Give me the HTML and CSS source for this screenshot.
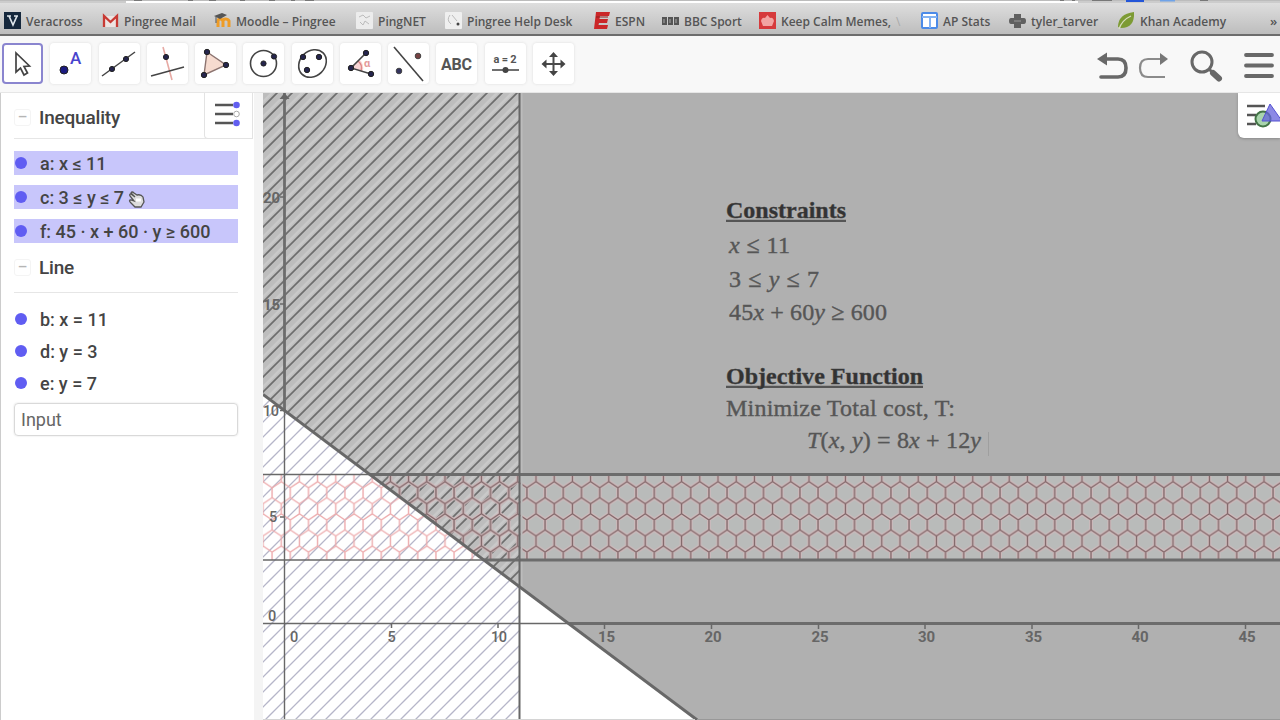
FILE: index.html
```html
<!DOCTYPE html>
<html lang="en">
<head>
<meta charset="utf-8">
<title>Inequality grapher</title>
<link rel="stylesheet" href="styles.css">
</head>
<body>
<div class="app">
  <div class="tabstrip">
    <svg width="1280" height="3" viewBox="0 0 1280 3"><path d="M0 0H1280" stroke="#bcbcbc" stroke-width="2"/><path d="M126 2H1078" stroke="#fff" stroke-width="2"/><path d="M134 0h8M188 0h5M209 0h7M240 0h5M269 0h6M291 0h4M305 0h9M1060 0h4M1072 0h3M1092 0h20M1200 0h8" stroke="#777" stroke-width="2"/><path d="M1126 0h18" stroke="#2456d8" stroke-width="4"/><path d="M1160 0h15" stroke="#6fa3e8" stroke-width="3"/></svg>
  </div>
  <nav class="bookmarks">
    <a class="bm"><svg width="18" height="18"><rect x="1" y="0" width="17" height="17" fill="#16283d"/><path d="M4 4h4M11 4h4M6 4l4 9 4-9" fill="none" stroke="#dfe6ec" stroke-width="1.7"/></svg><span class="t1">Veracross</span></a>
    <a class="bm"><svg width="18" height="18"><rect x="2" y="4" width="15" height="11" fill="#eee4e2"/><path d="M3 15V4l6.500 6L16 4v11" fill="none" stroke="#c83a34" stroke-width="2.300"/></svg><span class="t2">Pingree Mail</span></a>
    <a class="bm"><svg width="18" height="18"><path d="M5 15V9q0-2 2-2t3 2v6M10 9q0-2 2.500-2T16 9v6" fill="none" stroke="#ee9c27" stroke-width="3"/><path d="M1 4l8-3 5 2-7 4z" fill="#555"/><path d="M3 5v6" stroke="#555"/></svg><span class="t3">Moodle – Pingree</span></a>
    <a class="bm"><svg width="18" height="18"><rect x="1" y="0" width="17" height="17" rx="1" fill="#ececec"/><path d="M4 5l4-2 3 3 4-2M5 10l3 3 2-4 4 3" fill="none" stroke="#bbb"/></svg><span class="t4">PingNET</span></a>
    <a class="bm"><svg width="18" height="18"><rect x="1" y="0" width="17" height="17" rx="1" fill="#efefef"/><path d="M6 3q-4 5 1 9M8 3l5 6" fill="none" stroke="#bbb"/><circle cx="14" cy="12" r="1.500" fill="#444"/></svg><span class="t5">Pingree Help Desk</span></a>
    <a class="bm"><svg width="18" height="18"><path d="M4 0h14l-1 4H8l-.5 3H16l-1 4H7l-.5 2H16l-1 4H2z" fill="#cb2729"/><path d="M4 5h12" stroke="#8d2020" stroke-width="1"/></svg><span class="t6">ESPN</span></a>
    <a class="bm"><svg width="18" height="18"><path d="M1 5h5v8H1zM7 5h5v8H7zM13 5h5v8h-5z" fill="#555"/><path d="M3 7v4M9 7v4M15 7v4" stroke="#aaa"/></svg><span class="t7">BBC Sport</span></a>
    <a class="bm"><svg width="18" height="18"><rect x="1" y="0" width="17" height="17" fill="#d63a3c"/><path d="M3 9q1-4 4-3l2.500-3L12 6q3-1 4 3l-2 5H5z" fill="#f2a4a2"/></svg><span class="t8">Keep Calm Memes,</span><i class="fade">\</i></a>
    <a class="bm"><svg width="18" height="18"><rect x="2" y="1" width="15" height="15" rx="1" fill="#fff" stroke="#4c8be8" stroke-width="2"/><path d="M2 5h15M10 5v11" stroke="#83b2f1" stroke-width="2"/></svg><span class="t9">AP Stats</span></a>
    <a class="bm"><svg width="18" height="18"><path d="M6 2h7v4h3q2 0 2 3t-2 3h-3v4H6v-4H3Q1 12 1 9t2-3h3z" fill="#606060"/><path d="M6 9h7" stroke="#999"/></svg><span class="t10">tyler_tarver</span></a>
    <a class="bm"><svg width="18" height="18"><path d="M1 15Q1 2 17 0q1 16-13 16z" fill="#7d9b34"/><path d="M2 17Q5 8 14 4" fill="none" stroke="#d8ddc0" stroke-width="1.300"/></svg><span class="t11">Khan Academy</span></a>
    <a class="bm more">»</a>
  </nav>

  <header class="toolbar">
    <div class="tools">
      <button class="tool active"><svg width="41" height="41"><path d="M14 10v19l4.500-4 3.500 7 3.500-2-3.500-6.500 5.500-.5z" fill="#fff" stroke="#444" stroke-width="1.700"/></svg></button>
      <button class="tool"><svg width="41" height="41"><circle cx="14" cy="27" r="4" fill="#1b1b80" stroke="#222" stroke-width="1"/><text x="20" y="21" class="pointA">A</text></svg></button>
      <button class="tool"><svg width="41" height="41"><path d="M3 33L36 9" stroke="#444" stroke-width="1.500"/><g class="dot"><circle cx="13" cy="26" r="2.600"/><circle cx="27" cy="16" r="2.600"/></g></svg></button>
      <button class="tool"><svg width="41" height="41"><path d="M16 4l9 33" stroke="#e7aaa4" stroke-width="1.600"/><path d="M4 33l33-9" stroke="#444" stroke-width="1.500"/><g class="dot"><circle cx="19" cy="14" r="2.600"/></g></svg></button>
      <button class="tool"><svg width="41" height="41"><path d="M12 9l19 13-22 10z" fill="#f6dbcf" stroke="#8c7470" stroke-width="1.400"/><g class="dot"><circle cx="12" cy="9" r="2.700"/><circle cx="31" cy="22" r="2.700"/><circle cx="9" cy="32" r="2.700"/></g></svg></button>
      <button class="tool"><svg width="41" height="41"><circle cx="20.500" cy="20.500" r="13" fill="none" stroke="#444" stroke-width="1.600"/><g class="dot"><circle cx="20.500" cy="20.500" r="2.600"/><circle cx="31" cy="13.500" r="2.600"/></g></svg></button>
      <button class="tool"><svg width="41" height="41"><ellipse cx="20.500" cy="20.500" rx="15" ry="12.500" transform="rotate(-45 20.500 20.500)" fill="none" stroke="#444" stroke-width="1.600"/><g class="dot"><circle cx="11" cy="14" r="2.700"/><circle cx="27" cy="14" r="2.700"/><circle cx="15" cy="27" r="2.700"/></g></svg></button>
      <button class="tool"><svg width="41" height="41"><path d="M11 25l9-8q4 4 3 11z" fill="#f8d5d5"/><path d="M18 18q5 4 3 10" fill="none" stroke="#df8888" stroke-width="1.500"/><path d="M26 10L11 25l20 6" fill="none" stroke="#444" stroke-width="1.500"/><text x="24" y="24" class="alpha">α</text><g class="dot"><circle cx="26" cy="10" r="2.700"/><circle cx="11" cy="25" r="2.700"/><circle cx="31" cy="31" r="2.700"/></g></svg></button>
      <button class="tool"><svg width="41" height="41"><path d="M6 4l29 34" stroke="#444" stroke-width="1.600"/><circle cx="30" cy="13" r="2.800" fill="#784242" stroke="#444"/><circle cx="11" cy="28" r="2.800" fill="#35355f" stroke="#444"/></svg></button>
      <button class="tool"><svg width="41" height="41"><text x="5" y="27" textLength="31" class="abc">ABC</text></svg></button>
      <button class="tool"><svg width="41" height="41"><text x="8.500" y="20" textLength="23" class="slider">a = 2</text><path d="M7 27h27" stroke="#555" stroke-width="1.700"/><circle cx="20.500" cy="27" r="3" fill="#444"/></svg></button>
      <button class="tool"><svg width="41" height="41"><path d="M20.500 12v18M11 21h19" stroke="#4a4a4a" stroke-width="2"/><path d="M20.500 9l-4.500 5h9zM20.500 33l-4.500-5h9zM8.500 21l5-4.500v9zM32.500 21l-5-4.500v9z" fill="#444"/></svg></button>
    </div>
    <svg class="actions" width="190" height="50" viewBox="1090 42 190 50">
      <path d="M1104 59h14q8 0 8 9t-8 9h-17" fill="none" stroke="#686868" stroke-width="3.600" stroke-linecap="round"/><path d="M1097 59l10-6.500v13z" fill="#686868"/>
      <path d="M1162 59h-14q-8 0-8 9t8 9h17" fill="none" stroke="#8b8b8b" stroke-width="2.200"/><path d="M1168 59l-8-6v12z" fill="#777"/>
      <circle cx="1202" cy="62" r="10" fill="none" stroke="#686868" stroke-width="3"/><path d="M1209 69l4 4" stroke="#686868" stroke-width="3"/><path d="M1213 73l6 5.500" stroke="#686868" stroke-width="6" stroke-linecap="round"/>
      <path d="M1246 55h26M1246 65.500h26M1246 76h26" stroke="#686868" stroke-width="3.800" stroke-linecap="round"/>
    </svg>
  </header>

  <main class="main">
    <aside class="algebra">
      <div class="group first"><span class="minus">–</span><span class="gname gi">Inequality</span>
        <button class="style"><svg width="48" height="45"><path d="M10 12h18M10 21h18M10 30h18" stroke="#555" stroke-width="2.500"/><circle cx="31.500" cy="12" r="3.300" fill="#625ff0"/><circle cx="31.500" cy="21" r="2.800" fill="#fff" stroke="#aaa"/><circle cx="31.500" cy="30" r="3.300" fill="#625ff0"/></svg></button>
      </div>
      <ul class="ineqs">
        <li><b class="mark"></b><span class="r1">a: x ≤ 11</span></li>
        <li><b class="mark"></b><span class="r2">c: 3 ≤ y ≤ 7</span>
          <svg class="hand" width="20" height="20"><path d="M4 4q1-2 3 0l3 2q4-1 6 2l1 5-3 5H8l-4-4q-3-3 0-3l3 1-4-5q-1-2 1-2l4 3z" fill="#ddd" stroke="#555" stroke-width="1.300"/><path d="M9 11h5" stroke="#fff" stroke-width="3"/></svg></li>
        <li><b class="mark"></b><span class="r3">f: 45 · x + 60 · y ≥ 600</span></li>
      </ul>
      <div class="group second"><span class="minus">–</span><span class="gname">Line</span></div>
      <ul class="lines">
        <li><b class="mark"></b><span>b: x = 11</span></li>
        <li><b class="mark"></b><span>d: y = 3</span></li>
        <li><b class="mark"></b><span>e: y = 7</span></li>
      </ul>
      <div class="input">Input</div>
    </aside>

    <section class="graph">
      <svg width="1017" height="627" viewBox="263 93 1017 627">
        <defs>
          <pattern id="hatch" width="15" height="15" patternUnits="userSpaceOnUse"><path d="M-2 12L12-2M8 17L17 8" stroke="#b6b6c9" stroke-width="1.300"/></pattern>
          <pattern id="hatchDark" width="15" height="15" patternUnits="userSpaceOnUse"><path d="M3 17L17 3M-2 7L7-2" stroke="#c9c9c9" stroke-width="2.500"/><path d="M-2 12L12-2M8 17L17 8" stroke="#6d6d6d" stroke-width="1.600"/></pattern>
          <pattern id="hexPink" x="526.900" y="487.700" width="18.200" height="32.200" patternUnits="userSpaceOnUse"><path d="M0 0V10L9.100 16.100L18.200 10V0M9.100 16.100V26.100L0 32.200M9.100 26.100L18.200 32.200M0 0L9.100-6.100M18.200 0L9.100-6.100" fill="none" stroke="#edabad" stroke-width="1.400"/></pattern>
          <pattern id="hexDark" x="526.900" y="487.700" width="18.200" height="32.200" patternUnits="userSpaceOnUse"><path id="h" d="M0 0V10L9.100 16.100L18.200 10V0M9.100 16.100V26.100L0 32.200M9.100 26.100L18.200 32.200" fill="none" stroke="#d0babc" stroke-width="3.600"/><path d="M0 0V10L9.100 16.100L18.200 10V0M9.100 16.100V26.100L0 32.200M9.100 26.100L18.200 32.200" fill="none" stroke="#7e6466" stroke-width="1.300"/></pattern>
          <clipPath id="above"><path d="M263 394.400V93H1280V720H697.200z"/></clipPath>
        </defs>
        <rect x="263" y="93" width="1017" height="627" fill="#fff"/>
        <rect x="263" y="93" width="256.500" height="627" fill="url(#hatch)"/>
        <rect x="263" y="474.500" width="256.500" height="85.500" fill="url(#hexPink)"/>
        <path d="M263 623.500H1280M284.500 93V720M263 474.500H1280M263 560H1280" stroke="#686868" stroke-width="1.400"/>
        <g clip-path="url(#above)">
          <rect x="263" y="93" width="1017" height="627" fill="#b0b0b0"/>
          <rect x="263" y="93" width="256.500" height="627" fill="#bdbdbd"/>
          <rect x="263" y="93" width="256.500" height="627" fill="url(#hatchDark)"/>
          <rect x="519.500" y="474.500" width="761" height="85.500" fill="#b9bbba"/>
          <rect x="263" y="474.500" width="1017" height="85.500" fill="url(#hexDark)"/>
          <path d="M521.500 93V590" stroke="#bcbcbc" stroke-width="2"/>
          <path d="M263 474.500H1280M263 560H1280" stroke="#6c6c6c" stroke-width="3"/>
          <path d="M284.500 93V720M263 623.500H1280" stroke="#6c6c6c" stroke-width="2.800"/>
          <path d="M284.500 93l-5 6h10z" fill="#666"/>
        </g>
        <path d="M519.500 93V720" stroke="#676767" stroke-width="2"/>
        <path d="M263 394.400L697.200 720" stroke="#686868" stroke-width="3"/>
        <path d="M391.500 623v5M498 623v5M604.500 623v6M711.500 623v6M818.500 623v6M925 623v6M1032 623v6M1138.500 623v6M1245.500 623v6M280 517h5M280 410.500h5M280 304h5M280 197h5" stroke="#686868" stroke-width="1.500"/>
        <g class="ticks">
          <text x="290" y="642">0</text><text x="387.500" y="642">5</text><text x="491" y="642" textLength="16">10</text>
          <text x="268" y="621">0</text><text x="269" y="522">5</text><text x="263" y="416" textLength="16">10</text>
        </g>
        <g class="ticks heavy">
          <text x="263" y="310">15</text><text x="263" y="203">20</text>
          <text x="598" y="642">15</text><text x="704.500" y="642">20</text><text x="811.500" y="642">25</text><text x="918" y="642">30</text><text x="1025" y="642">35</text><text x="1131.500" y="642">40</text><text x="1238.500" y="642">45</text>
        </g>
        <path d="M726 220.800H846M726 386.800H923" stroke="#555" stroke-width="2.200"/>
        <g class="note">
          <text x="726" y="217.500" textLength="120" class="head">Constraints</text>
          <text x="729" y="252.500" textLength="61"><tspan class="v">x</tspan> ≤ 11</text>
          <text x="729" y="286.500" textLength="90">3 ≤ <tspan class="v">y</tspan> ≤ 7</text>
          <text x="729" y="320" textLength="158">45<tspan class="v">x</tspan> + 60<tspan class="v">y</tspan> ≥ 600</text>
          <text x="726" y="383.500" textLength="197" class="head">Objective Function</text>
          <text x="726" y="416" textLength="229">Minimize Total cost, T:</text>
          <text x="807" y="447.500" textLength="174"><tspan class="v">T</tspan>(<tspan class="v">x</tspan>, <tspan class="v">y</tspan>) = 8<tspan class="v">x</tspan> + 12<tspan class="v">y</tspan></text>
        </g>
        <path d="M988.500 432V456" stroke="#9f9f9f"/>
        <path d="M263 719.500H695" stroke="#d4d4d4"/><path d="M697 719.500H1280" stroke="#989898"/>
      </svg>
      <button class="view"><svg width="42" height="45"><path d="M9 13h18M9 22h9M9 31h9" stroke="#555" stroke-width="2.300"/><circle cx="25" cy="26" r="7.500" fill="#a8d5ac" stroke="#437447" stroke-width="2"/><path d="M32 11l12 17H24z" fill="#6461dc" fill-opacity=".75" stroke="#5551d2"/></svg></button>
    </section>
  </main>
</div>
</body>
</html>
```
FILE: styles.css
```css
* { box-sizing: border-box; }
body { margin: 0; font-family: Roboto, "Liberation Sans", sans-serif; color: #444; }
svg { display: block; }
button { padding: 0; font: inherit; }
ul { list-style: none; margin: 0; padding: 0; }
.app { width: 1280px; height: 720px; overflow: hidden; display: flex; flex-direction: column; background: #fff; }
.tabstrip { height: 3px; background: #ccc; }
.bookmarks {
  height: 33px; padding-left: 3px; border-bottom: 2px solid #6d6d6d;
  background: linear-gradient(#dedede, #bdbdbd);
  display: grid; align-items: center;
  grid-template-columns: 98px 112px 142px 89px 148px 69px 97px 162px 88px 109px 153px 10px;
}
.bm { display: flex; align-items: center; gap: 5px; height: 33px; padding-top: 3px; white-space: nowrap; color: #555; font: 600 12px "Open Sans", sans-serif; }
.bm svg { flex: none; }
.fade { font-style: normal; font-weight: 400; color: #aaa; }
.more { font-size: 13px; }
.toolbar { height: 57px; background: #f8f8f8; border-bottom: 1px solid #e6e6e6; display: flex; justify-content: space-between; padding: 7px 0 0 2px; }
.actions { margin-top: -1px; }
.tools { display: grid; grid-template-columns: repeat(12, 48.270px); }
.tool { width: 41px; height: 41px; border: 0; border-radius: 4px; background: #fff; box-shadow: 0 0 3px #ddd; }
.tool.active { box-shadow: inset 0 0 0 2px #8a85cf; }
.dot { fill: #25254d; stroke: #222; stroke-width: 1; }
.pointA { font: 500 17px Roboto, sans-serif; fill: #4844cd; }
.alpha { font: 700 11px Roboto, sans-serif; fill: #e59a9a; }
.abc { font: 700 16px Roboto, sans-serif; fill: #555; }
.slider { font: 700 11px Roboto, sans-serif; fill: #555; }
.main { flex: 1; display: flex; min-height: 0; }
.algebra { width: 263px; border-left: 1px solid #ccc; border-right: 9px solid #f4f4f4; padding-left: 13px; padding-right: 16px; font-size: 18px; font-weight: 500; }
.group { display: flex; align-items: center; border-bottom: 1px solid #e6e6e6; }
.group.first { height: 46px; padding-top: 3px; margin-right: -15px; }
.group.second { height: 47px; padding-bottom: 6px; margin-top: 2px; }
.group.second { height: 45px; margin-top: 5px; }
.minus { width: 17px; height: 17px; line-height: 15px; text-align: center; border: 1px solid #f4f4f4; border-radius: 3px; color: #b5b5b5; font-size: 15px; margin-right: 8px; }
.gname { font-size: 19px; letter-spacing: -.2px; }
.style { width: 49px; height: 46px; margin: -3px 0 0 auto; background: #fff; border: 1px solid #e3e3e3; border-top: 0; border-radius: 0 0 0 4px; }
.mark { width: 12px; height: 12px; border-radius: 50%; background: #605df2; flex: none; margin: 0 13px 0 1px; }
.ineqs { display: grid; gap: 10px; padding-top: 12px; }
.ineqs li { height: 24px; background: #c8c6fb; display: flex; align-items: center; position: relative; white-space: pre; }
.hand { position: absolute; left: 113px; top: 4px; }
.lines { display: grid; grid-auto-rows: 32px; padding-top: 10px; }
.lines li { display: flex; align-items: center; }
.input { width: 224px; height: 33px; margin-top: 4px; border: 1px solid #d9d9d9; border-radius: 4px; padding-left: 6px; line-height: 32px; font-weight: 400; color: #666; box-shadow: 0 0 2px #ddd; }
.graph { flex: 1; position: relative; overflow: hidden; }
.view { position: absolute; right: 0; top: 0; width: 42px; height: 45px; border: 0; border-radius: 0 0 0 6px; background: #fff; box-shadow: 0 1px 3px #888; }
.ticks { font: 500 14.500px Roboto, sans-serif; fill: #666; }
.heavy { font-weight: 700; font-size: 15px; }
.note { font: 24px "Liberation Serif", serif; fill: #565656; stroke: #565656; stroke-width: .4px; }
.note .head { font-weight: 700; fill: #333; stroke: #444; }
.v { font-style: italic; }
```
